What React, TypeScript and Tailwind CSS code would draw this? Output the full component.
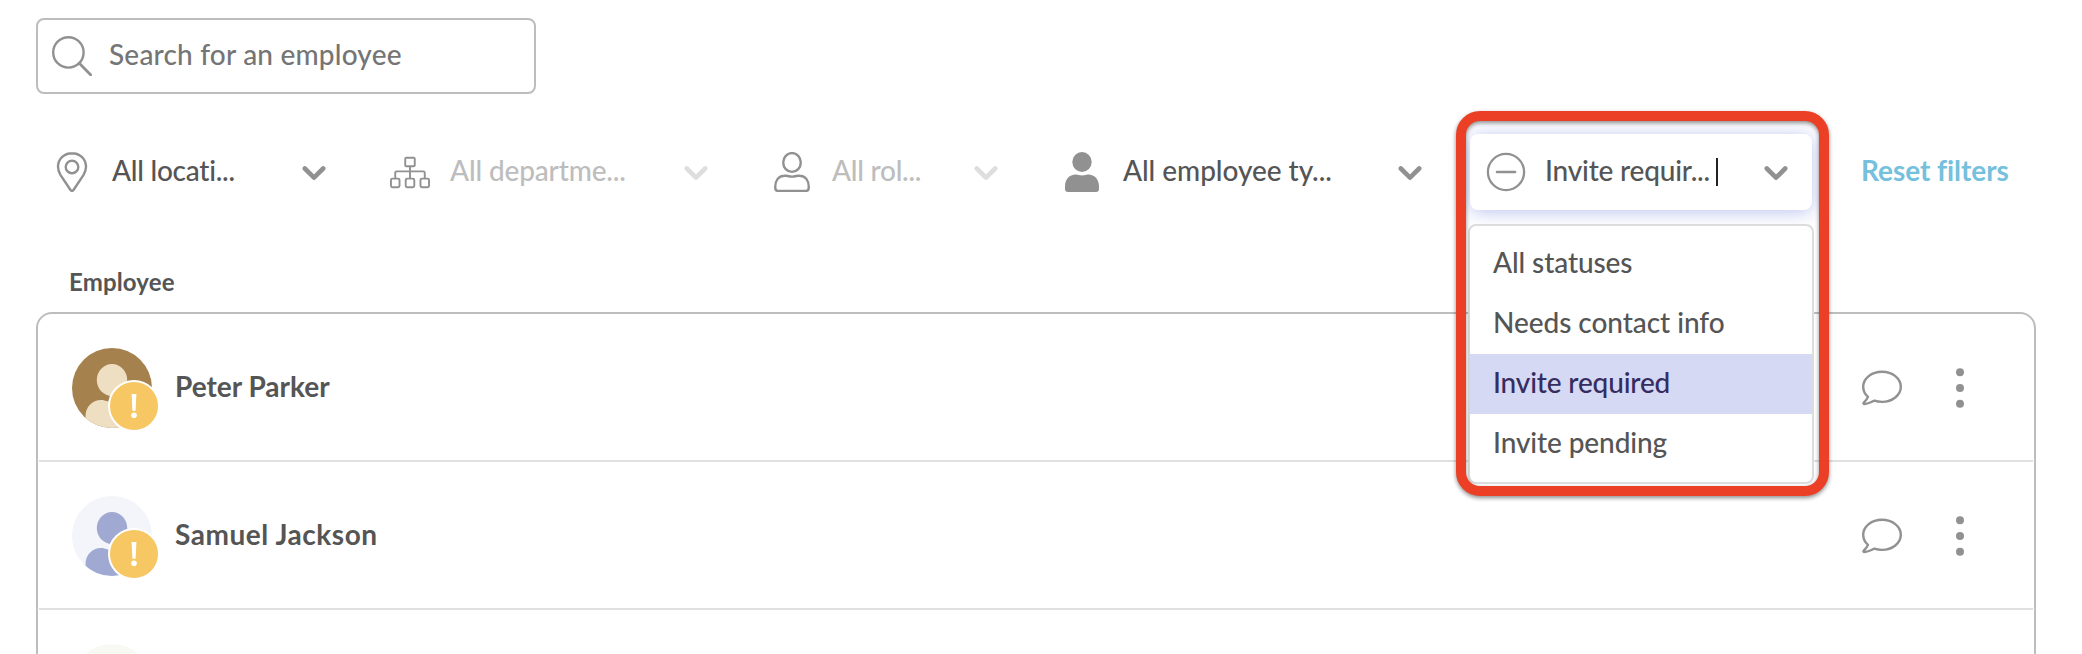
import type { ReactNode } from "react";
import clsx from "clsx";

function SearchIcon() {
  return (
    <svg width="40" height="40" viewBox="0 0 40 40" fill="none" stroke="#919191">
      <circle cx="16.4" cy="16.4" r="15.2" strokeWidth="2.4" />
      <path d="M27.3 27.3 38.6 38.8" strokeWidth="2.8" strokeLinecap="round" />
    </svg>
  );
}

function PinIcon() {
  return (
    <svg width="40" height="40" viewBox="0 0 40 40" fill="none" stroke="#919191" strokeWidth="2.4">
      <path
        d="M20 1.200C11.900 1.200 6 7.100 6 14.800c0 3 1 5.600 2.400 8L18.500 38c.8 1.200 2.200 1.200 3 0L31.600 22.800c1.400-2.400 2.400-5 2.400-8C34 7.100 28.100 1.200 20 1.200z"
        strokeLinejoin="round"
      />
      <circle cx="20" cy="15" r="6.300" />
    </svg>
  );
}

function DepartmentIcon() {
  return (
    <svg width="42" height="40" viewBox="0 0 42 40" fill="none" stroke="#919191" strokeWidth="2">
      <rect x="16" y="5" width="10" height="9" rx="1.2" />
      <rect x="1" y="27" width="9" height="9" rx="1.5" />
      <rect x="16.5" y="27" width="9" height="9" rx="1.5" />
      <rect x="32" y="27" width="9" height="9" rx="1.5" />
      <path d="M21 14v13M5.500 27v-6.200a1.500 1.500 0 0 1 1.500-1.500h28a1.500 1.500 0 0 1 1.500 1.500V27" />
    </svg>
  );
}

function RoleIcon() {
  return (
    <svg width="40" height="40" viewBox="0 0 40 40" fill="none" stroke="#919191" strokeWidth="2.4">
      <ellipse cx="20" cy="10.5" rx="8.8" ry="9.4" />
      <path d="M12.500 23.800c2.500-.5 3.500.8 7.500.8s5-1.300 7.500-.8c6.300.3 9.300 5.200 9.300 11.200 0 2.700-.6 3.900-2.600 3.900H5.800c-2 0-2.600-1.200-2.600-3.900 0-6 3-10.900 9.300-11.200z" />
    </svg>
  );
}

function PersonIcon() {
  return (
    <svg width="40" height="40" viewBox="0 0 40 40" fill="#919191">
      <ellipse cx="20" cy="10" rx="9.7" ry="10" />
      <path d="M13 22.500c2.800-.4 3.500.9 7 .9s4.200-1.300 7-.9c6.500.4 10 5.800 10 11.700v2.800c0 2-1 3-3 3H6c-2 0-3-1-3-3v-2.800c0-5.900 3.500-11.300 10-11.700z" />
    </svg>
  );
}

function StatusIcon() {
  return (
    <svg width="40" height="40" viewBox="0 0 40 40" fill="none" stroke="#919191">
      <circle cx="20" cy="20" r="18.1" strokeWidth="2.3" />
      <path d="M11 20h18" strokeWidth="2.6" strokeLinecap="round" />
    </svg>
  );
}

function Chevron({ muted }: { muted?: boolean }) {
  return (
    <svg
      width="24"
      height="16"
      viewBox="0 0 24 16"
      fill="none"
      className={clsx("shrink-0", muted ? "stroke-[#dedede]" : "stroke-[#919191]")}
      strokeWidth="4.6"
      strokeLinecap="round"
      strokeLinejoin="round"
    >
      <path d="M2.800 3.500 12 12.700l9.200-9.200" />
    </svg>
  );
}

function CommentIcon() {
  return (
    <svg width="40" height="40" viewBox="0 0 40 40" fill="none" stroke="#919191" strokeWidth="2.4">
      <path
        d="M6 28.900C2.900 26.300 1.200 22.700 1.200 18.800 1.200 10.400 9.600 3.700 20 3.700s18.800 6.700 18.800 15.100S30.400 33.900 20 33.900c-2.700 0-5.300-.4-7.600-1.200-2.900.9-6.400 3.500-10.200 3.300-.9-.1-1-.8-.4-1.400 2-2 3.500-4 4.200-5.700z"
        strokeLinejoin="round"
      />
    </svg>
  );
}

function DotsIcon() {
  return (
    <svg width="8" height="40" viewBox="0 0 8 40" fill="#919191">
      <circle cx="4" cy="4.2" r="4" />
      <circle cx="4" cy="20" r="4" />
      <circle cx="4" cy="35.7" r="4" />
    </svg>
  );
}

function Avatar({ bg, fg }: { bg: string; fg: string }) {
  return (
    <div className="relative size-20 shrink-0">
      <div className={clsx("size-20 overflow-hidden rounded-full", bg)}>
        <svg width="80" height="80" viewBox="0 0 80 80" className={fg}>
          <ellipse cx="40" cy="32" rx="15.2" ry="16" />
          <path d="M13.500 80V68c0-9 6.500-16 15.500-16 4.500 0 6 2 11 2s6.500-2 11-2c9 0 15.500 7 15.500 16v12z" />
        </svg>
      </div>
      {/* Warning badge */}
      <div className="absolute top-8 left-9 size-[52px] rounded-full border-2 border-white bg-[#f6c762]">
        <svg width="48" height="48" viewBox="0 0 48 48" fill="#fff">
          <path d="M21.600 12h4.800l-.8 16.800h-3.200z" />
          <circle cx="24" cy="33.2" r="2.8" />
        </svg>
      </div>
    </div>
  );
}

type FilterProps = {
  icon: ReactNode;
  label: string;
  className: string;
  labelClass?: string;
  muted?: boolean;
  focused?: boolean;
};

function Filter({ icon, label, className, labelClass, muted, focused }: FilterProps) {
  return (
    <div className={clsx("flex h-[76px] shrink-0 items-center rounded-lg pr-6 pl-4", className)}>
      <div className="flex w-10 shrink-0 justify-center">{icon}</div>
      <span
        className={clsx(
          "pb-1 whitespace-nowrap",
          focused ? "ml-[19px]" : "ml-5",
          muted ? "text-[#bdbdbd]" : "text-[#555]",
          labelClass
        )}
      >
        {label}
      </span>
      {focused && <span className="ml-[6px] h-7 w-0.5 bg-[#222]" />}
      <div className="ml-auto pt-0.5">
        <Chevron muted={muted} />
      </div>
    </div>
  );
}

const statuses = [
  { label: "All statuses", className: "tracking-[-0.1px]" },
  { label: "Needs contact info", className: "tracking-[-0.05px]" },
  { label: "Invite required", className: "tracking-[-0.15px] bg-[#d6d9f3] text-[#352c60]" },
  { label: "Invite pending", className: "tracking-[-0.1px]" },
];

const employees = [
  { name: "Peter Parker", bg: "bg-[#a4814d]", fg: "fill-[#eedec2]", className: "tracking-[0px]" },
  { name: "Samuel Jackson", bg: "bg-[#f4f5fb]", fg: "fill-[#a0a9d1]", className: "tracking-[0.55px]" },
  { name: "", bg: "bg-[#f9f9f4]", fg: "fill-[#d9dcc0]", className: "" },
];

export default function App() {
  return (
    <div className="h-[654px] w-[2082px] overflow-hidden bg-white pt-[18px] pl-9 font-['Lato',sans-serif] text-[28px] leading-[36px] font-medium text-[#555]">
      {/* Search */}
      <div className="flex h-[76px] w-[500px] items-center rounded-lg border-2 border-[#bdbdbd] pl-3.5">
        <SearchIcon />
        <span className="ml-[17px] pb-1 tracking-[0.2px] text-[#757575]">Search for an employee</span>
      </div>

      {/* Filters */}
      <div className="mt-10 flex items-center gap-6">
        <Filter icon={<PinIcon />} label="All locati..." className="w-[314px]" labelClass="-ml-px tracking-[-0.25px]" />
        <Filter icon={<DepartmentIcon />} label="All departme..." className="w-[358px]" labelClass="tracking-[-0.15px]" muted />
        <Filter icon={<RoleIcon />} label="All rol..." className="w-[266px]" labelClass="tracking-[-0.25px]" muted />
        <Filter icon={<PersonIcon />} label="All employee ty..." className="w-[400px]" labelClass="pl-px tracking-[-0.05px]" />

        <div className="relative">
          <Filter
            icon={<StatusIcon />}
            label="Invite requir..."
            className="w-[342px] bg-white shadow-[0_2px_18px_rgba(120,135,225,0.5)]"
            labelClass="tracking-[-0.2px]"
            focused
          />
          {/* Status menu */}
          <div className="absolute top-[90px] -left-0.5 z-10 w-[346px] rounded-lg border-2 border-[#dcdcdc] bg-white py-2">
            {statuses.map((s) => (
              <div key={s.label} className={clsx("h-[60px] pt-2.5 pl-[23px]", s.className)}>
                {s.label}
              </div>
            ))}
          </div>
          {/* Highlight frame */}
          <div className="absolute -top-[23px] -left-3.5 z-20 h-[385px] w-[373px] rounded-[24px] border-[10px] border-[#ec4026] drop-shadow-[0_2px_2px_rgba(0,0,0,0.45)]" />
        </div>

        <a className="ml-[25px] pb-1 font-bold tracking-[-0.05px] text-[#74c0dd]">Reset filters</a>
      </div>

      <div className="mt-[58px] pb-4 pl-[33px] text-[24px] leading-[28px] font-bold tracking-[0.15px]">
        Employee
      </div>

      {/* Employee list */}
      <div className="h-[400px] w-[2000px] rounded-t-[16px] border-2 border-[#bdbdbd]">
        {employees.map((e, i) => (
          <div key={i} className="mx-px flex h-[148px] items-center border-b-2 border-[#e0e0e0] pt-0.5 pl-[33px]">
            <Avatar bg={e.bg} fg={e.fg} />
            <span className={clsx("ml-[23px] pb-1 font-bold", e.className)}>{e.name}</span>
            <div className="mr-[69px] ml-auto flex items-center gap-[54px]">
              <CommentIcon />
              <DotsIcon />
            </div>
          </div>
        ))}
      </div>
    </div>
  );
}
